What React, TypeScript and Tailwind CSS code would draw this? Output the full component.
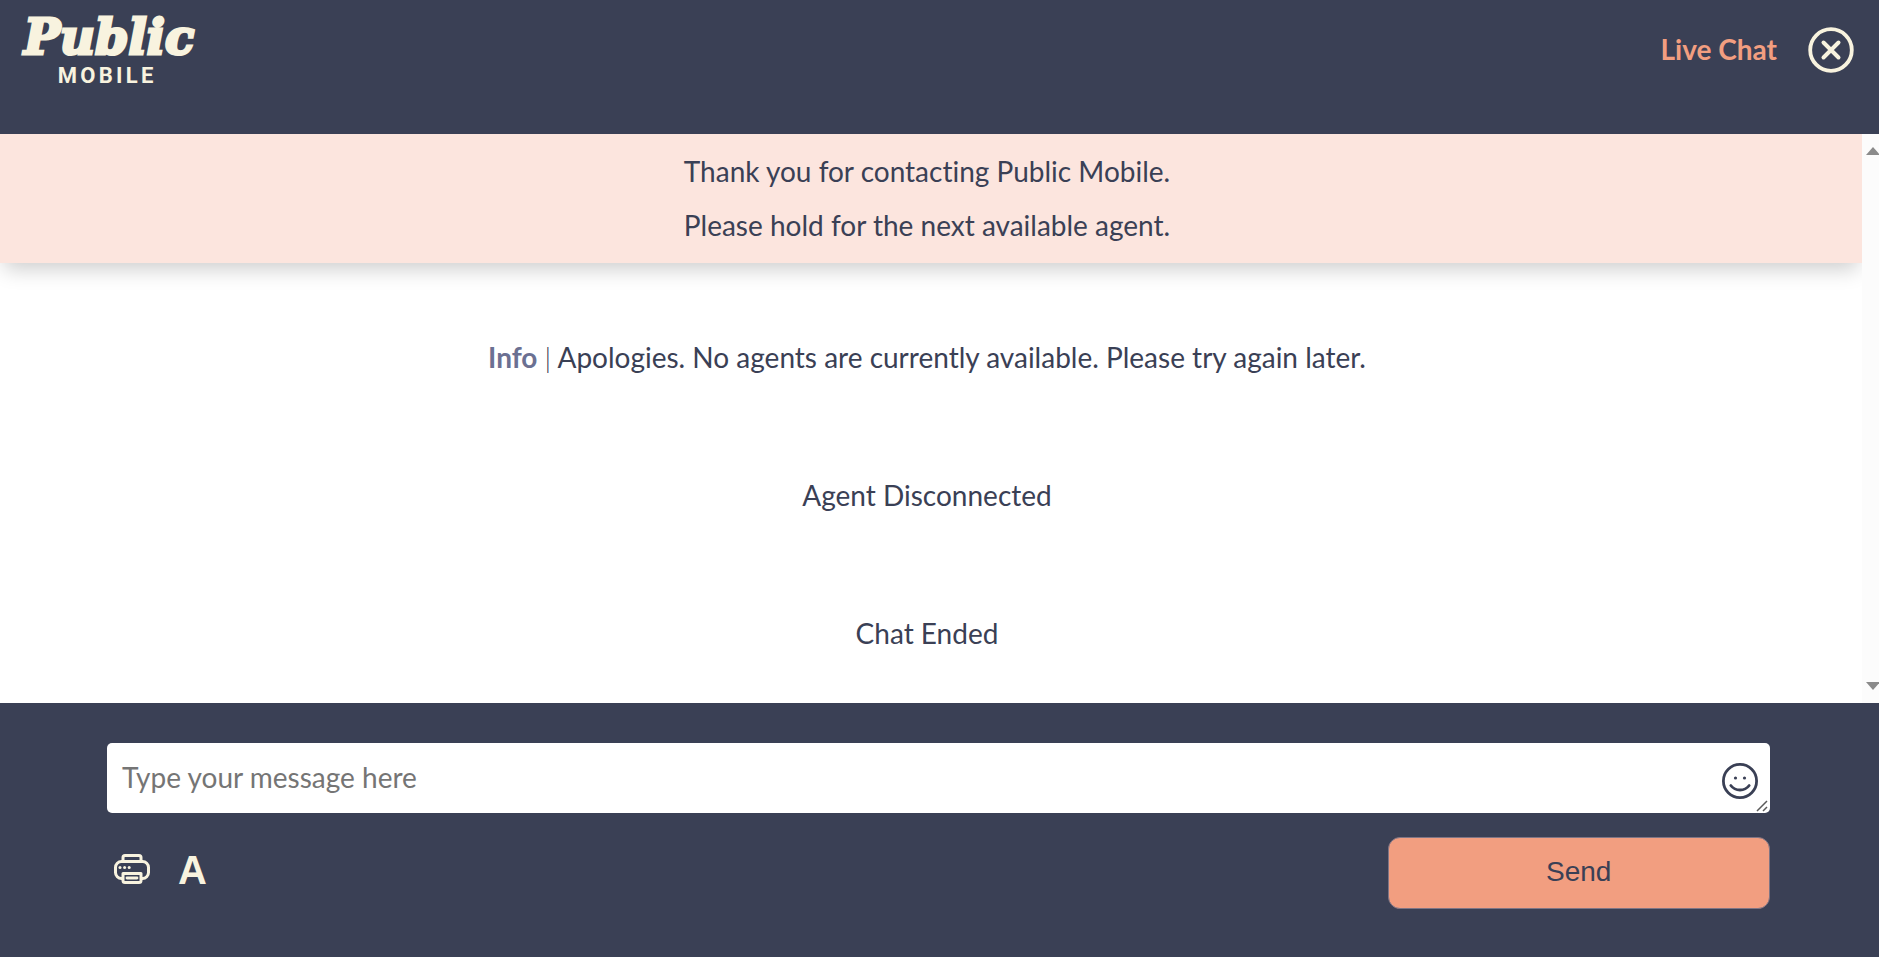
import React from "react";

const notices = ["Agent Disconnected", "Chat Ended"];

function Logo() {
  return (
    <a href="#" aria-label="Public Mobile" className="flex flex-col items-center text-[#f8f3df]">
      <span className="font-['DejaVu_Serif',serif] text-[48px] leading-[52px] font-bold italic [-webkit-text-stroke:3px_#f8f3df]">
        Public
      </span>
      <span className="pr-1 font-['Roboto',sans-serif] text-[22px] leading-[26px] font-bold tracking-[0.15em]">
        MOBILE
      </span>
    </a>
  );
}

function CloseIcon() {
  return (
    <svg viewBox="0 0 46 46" className="size-[46px]" fill="none" stroke="currentColor" strokeLinecap="round" aria-hidden="true">
      <circle cx="23" cy="23" r="20.8" strokeWidth="3.8" />
      <path d="M15.500 15.500 30.500 30.500M30.500 15.500 15.500 30.500" strokeWidth="4" />
    </svg>
  );
}

function PrinterIcon() {
  return (
    <svg viewBox="0 0 36 30" className="h-[30px] w-9" fill="none" stroke="currentColor" strokeWidth="3" strokeLinejoin="round" aria-hidden="true">
      <path d="M9 7V3.500a2 2 0 0 1 2-2h14a2 2 0 0 1 2 2V7" />
      <path d="M9 24.500H7.500a6 6 0 0 1-6-6v-5a6 6 0 0 1 6-6h21a6 6 0 0 1 6 6v5a6 6 0 0 1-6 6H27" />
      <path d="M9 19.500h18v7a2 2 0 0 1-2 2H11a2 2 0 0 1-2-2z" />
      <path d="M13 24h10" strokeWidth="2.800" strokeLinecap="round" />
      <g fill="currentColor" stroke="none">
        <circle cx="6" cy="13.500" r="1.500" />
        <circle cx="10.600" cy="13.500" r="1.500" />
        <circle cx="15.200" cy="13.500" r="1.500" />
      </g>
    </svg>
  );
}

function SmileIcon() {
  return (
    <svg viewBox="0 0 36 36" className="size-9" fill="none" stroke="currentColor" strokeLinecap="round" aria-hidden="true">
      <circle cx="18" cy="18" r="16.600" strokeWidth="2.800" />
      <path d="M8.800 22.500c4.600 6 13.800 6 18.400 0" strokeWidth="2.800" />
      <circle cx="13.500" cy="15" r="1.600" fill="currentColor" stroke="none" />
      <circle cx="22.500" cy="15" r="1.600" fill="currentColor" stroke="none" />
    </svg>
  );
}

function ResizeGrip() {
  return (
    <svg viewBox="0 0 12 12" className="pointer-events-none absolute right-0.5 bottom-px size-3" fill="none" stroke="#5a5a5a" strokeWidth="1.500" aria-hidden="true">
      <path d="M1 11 11 1M7 11 11 7" />
    </svg>
  );
}

function ScrollRail() {
  return (
    <div className="flex w-[17px] shrink-0 flex-col justify-between overflow-hidden bg-[#fcfcfc] py-[13px] pl-1 text-[#8b8b8b]">
      <button type="button" aria-label="Scroll up">
        <svg viewBox="0 0 14 8" className="h-2 w-3.5" fill="currentColor" aria-hidden="true">
          <path d="M7 0 14 8H0z" />
        </svg>
      </button>
      <button type="button" aria-label="Scroll down">
        <svg viewBox="0 0 14 8" className="h-2 w-3.5" fill="currentColor" aria-hidden="true">
          <path d="M7 8 14 0H0z" />
        </svg>
      </button>
    </div>
  );
}

export default function App() {
  return (
    <div className="flex min-h-screen flex-col bg-white pb-[7px] font-['Lato',sans-serif] text-[28px] text-[#3a4055] [font-variant-ligatures:none]">
      <header className="flex h-[134px] items-start justify-between bg-[#3a4055] pt-[11px] pr-[25px] pl-6">
        <Logo />
        <div className="flex items-center gap-[31px] pt-4">
          <h1 className="pb-0.5 font-bold text-[#f29e80]">Live Chat</h1>
          <button type="button" aria-label="Close chat" className="text-[#f8f3df]">
            <CloseIcon />
          </button>
        </div>
      </header>

      <main className="flex grow">
        <div className="flex grow flex-col overflow-hidden text-center">
          <div className="bg-[#fce5de] pt-[10px] pr-2 pb-[11px] leading-[54px] shadow-[0_10px_20px_-4px_rgba(0,0,0,0.2)]">
            <p>Thank you for contacting Public Mobile.</p>
            <p>Please hold for the next available agent.</p>
          </div>
          <div className="flex flex-col gap-[84px] pt-[67px] pr-2 leading-[54px]">
            <p>
              <b className="text-[#6b7092]">Info</b> <span className="font-light">|</span> Apologies. No agents are currently
              available. Please try again later.
            </p>
            {notices.map((notice) => (
              <p key={notice}>{notice}</p>
            ))}
          </div>
        </div>
        <ScrollRail />
      </main>

      <footer className="bg-[#3a4055] pt-10 pr-[109px] pb-12 pl-[107px]">
        <form onSubmit={(event) => event.preventDefault()}>
          <div className="relative flex">
            <textarea
              rows={1}
              aria-label="Message"
              placeholder="Type your message here"
              className="h-[70px] w-full resize-none overflow-hidden rounded-[5px] bg-white py-[13px] pr-16 pl-[15px] leading-[42px] placeholder:text-[#757575]"
            />
            <button type="button" aria-label="Insert emoji" className="absolute top-5 right-3">
              <SmileIcon />
            </button>
            <ResizeGrip />
          </div>
          <div className="flex items-start justify-between pt-6">
            <div className="flex items-center gap-7 pt-[11px] pl-[7px] text-[#f8f3df]">
              <button type="button" aria-label="Print transcript">
                <PrinterIcon />
              </button>
              <button type="button" aria-label="Text size" className="pt-0.5 font-['Liberation_Sans',sans-serif] text-[40px] leading-10 font-bold">
                A
              </button>
            </div>
            <button
              type="submit"
              className="h-[72px] w-[23%] rounded-xl border border-[#7f7585] bg-[#f29e80] pb-0.5 font-['Liberation_Sans',sans-serif]"
            >
              Send
            </button>
          </div>
        </form>
      </footer>
    </div>
  );
}
